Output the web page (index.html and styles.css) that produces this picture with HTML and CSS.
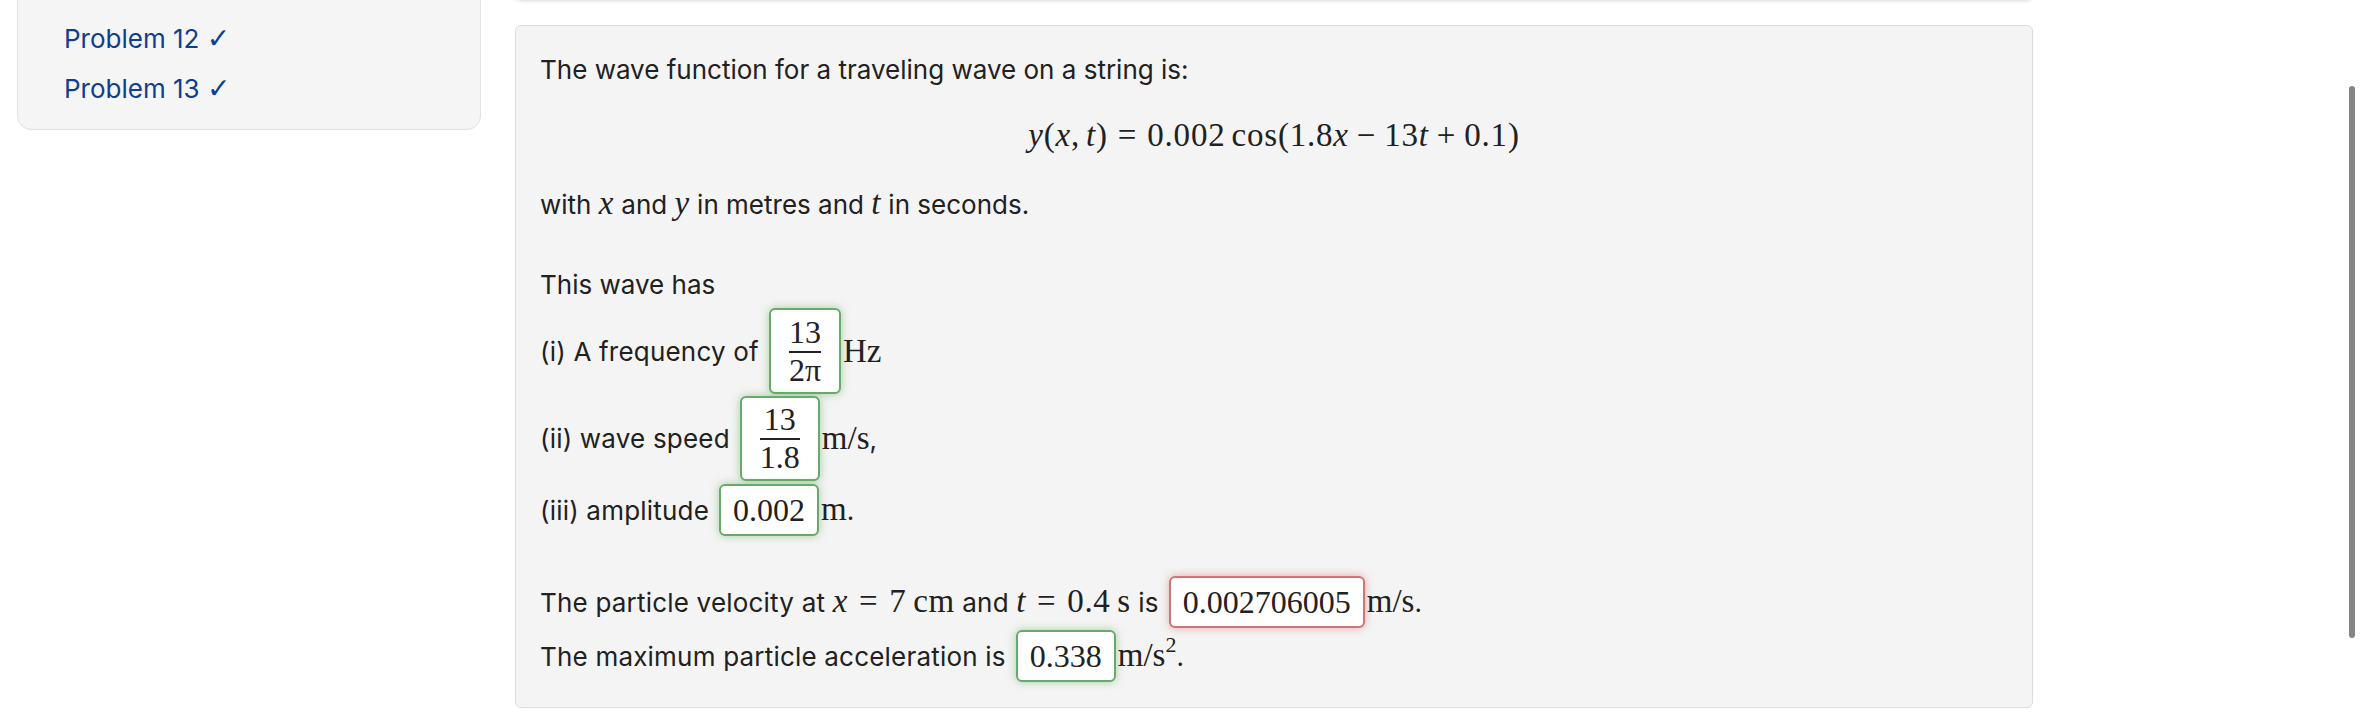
FILE: index.html
```html
<!DOCTYPE html>
<html lang="en">
<head>
<meta charset="utf-8">
<title>Problem 13</title>
<link rel="stylesheet" href="styles.css">
</head>
<body>
<div class="page">
  <aside class="sidebar">
    <a class="nav-link" href="#">Problem 12 <span class="tick">✓</span></a>
    <a class="nav-link" href="#">Problem 13 <span class="tick">✓</span></a>
  </aside>
  <main class="main">
    <div class="prev-card"></div>
    <section class="card">
      <p class="line l1">The wave function for a traveling wave on a string is:</p>
      <div class="display-eq"><span class="mi">y</span>(<span class="mi">x</span>,<span class="sp"></span><span class="mi">t</span>)<span class="rel">=</span>0.002<span class="sp"></span>cos(1.8<span class="mi">x</span><span class="bin">−</span>13<span class="mi">t</span><span class="bin">+</span>0.1)</div>
      <p class="line l2">with <span class="math"><span class="mi">x</span></span> and <span class="math"><span class="mi">y</span></span> in metres and <span class="math"><span class="mi">t</span></span> in seconds.</p>
      <p class="line l3">This wave has</p>
      <div class="row r1">
        <span class="txt">(i) A frequency of</span>
        <span class="ans ok frac-box h86"><span class="frac"><span class="num">13</span><span class="bar"></span><span class="den">2π</span></span></span>
        <span class="unit">Hz</span>
      </div>
      <div class="row r2">
        <span class="txt">(ii) wave speed</span>
        <span class="ans ok frac-box h85"><span class="frac"><span class="num">13</span><span class="bar"></span><span class="den">1.8</span></span></span>
        <span class="unit">m/s<span class="punct">,</span></span>
      </div>
      <div class="row r3">
        <span class="txt">(iii) amplitude</span>
        <span class="ans ok simple">0.002</span>
        <span class="unit">m<span class="punct">.</span></span>
      </div>
      <div class="row r4">
        <span class="txt">The particle velocity at <span class="math"><span class="mi">x</span><span class="rel">=</span>7<span class="thin"></span>cm</span> and <span class="math"><span class="mi">t</span><span class="rel">=</span>0.4<span class="thin"></span>s</span> is</span>
        <span class="ans bad simple">0.002706005</span>
        <span class="unit">m/s<span class="punct">.</span></span>
      </div>
      <div class="row r5">
        <span class="txt">The maximum particle acceleration is</span>
        <span class="ans ok simple">0.338</span>
        <span class="unit">m/s<sup class="sup">2</sup><span class="punct">.</span></span>
      </div>
    </section>
  </main>
</div>
<div class="scroll-thumb"></div>
</body>
</html>
```

FILE: styles.css
```css
html, body {
  margin: 0;
  padding: 0;
  background: #ffffff;
}
body {
  font-family: Inter, "Noto Sans", "Liberation Sans", sans-serif;
  color: #212121;
  width: 2360px;
  height: 725px;
  overflow: hidden;
}
.page {
  display: flex;
  align-items: flex-start;
  margin-top: -60px;
}
.sidebar {
  box-sizing: border-box;
  width: 464px;
  margin-left: 17px;
  height: 190px;
  padding: 73px 20px 0 46px;
  background: #f5f5f5;
  border: 1px solid #e2e2e2;
  border-radius: 14px;
  display: flex;
  flex-direction: column;
}
.nav-link {
  display: block;
  height: 50px;
  font-size: 26px;
  line-height: 50px;
  color: #0f3e91;
  text-decoration: none;
  white-space: nowrap;
}
.tick {
  font-family: "DejaVu Sans", sans-serif;
  font-size: 28px;
  line-height: 1;
}
.main {
  width: 1518px;
  margin-left: 34px;
  display: flex;
  flex-direction: column;
}
.prev-card {
  height: 59px;
  background: #f4f4f4;
  border-radius: 0 0 6px 6px;
  box-shadow: 0 1px 4px rgba(0,0,0,0.22);
}
.card {
  box-sizing: border-box;
  margin-top: 26px;
  height: 683px;
  padding: 24px 24px 24px 24px;
  background: #f4f4f4;
  border: 1px solid #dcdcdc;
  border-radius: 6px;
  display: flex;
  flex-direction: column;
  align-items: stretch;
}
.line {
  margin: 0;
  font-size: 26px;
  line-height: 39px;
}
.l2 { margin-top: 26px; }
.l3 { margin-top: 41px; }
.math, .display-eq, .unit, .ans {
  font-family: "Liberation Serif", "DejaVu Serif", serif;
}
.math {
  font-size: 33px;
  letter-spacing: 0.6px;
}
.mi {
  font-style: italic;
}
.display-eq {
  margin-top: 24px;
  text-align: center;
  font-size: 33px;
  letter-spacing: 0.8px;
  line-height: 45px;
}
.sp { display: inline-block; width: 6px; }
.thin { display: inline-block; width: 7px; }
.rel { margin: 0 10px; }
.math .rel { margin: 0 11px; }
.bin { margin: 0 8px; }
.row {
  display: flex;
  align-items: center;
  font-size: 26px;
  line-height: 39px;
}
.row .txt { letter-spacing: 0.2px; }
.row .txt .math { letter-spacing: 0.6px; }
.r1 { margin-top: 4px; }
.r2 { margin-top: 2px; }
.r3 { margin-top: 3px; }
.r4 { margin-top: 40px; }
.r5 { margin-top: 2px; }
.txt { white-space: pre; }
.ans {
  box-sizing: border-box;
  margin-left: 10px;
  background: #ffffff;
  border: 2px solid #6aa96c;
  border-radius: 6px;
  box-shadow: 0 0 8px rgba(90, 170, 90, 0.5);
  font-size: 32px;
  display: inline-flex;
  align-items: center;
  justify-content: center;
  padding: 0 12px;
}
.ans.bad {
  border-color: #d47373;
  box-shadow: 0 0 8px rgba(210, 100, 100, 0.5);
}
.simple { height: 52px; }
.h86 { height: 86px; }
.h85 { height: 85px; }
.frac {
  display: inline-flex;
  flex-direction: column;
  align-items: center;
  margin: 0 6px;
}
.num, .den {
  line-height: 33px;
}
.num { padding-bottom: 2px; }
.den { padding-top: 1px; }
.bar {
  align-self: stretch;
  height: 2px;
  background: #222;
}
.unit {
  margin-left: 2px;
  font-size: 33px;
}
.punct {
  font-family: Inter, "Noto Sans", sans-serif;
  font-size: 26px;
}
.sup {
  font-size: 22px;
  line-height: 0;
  vertical-align: 14px;
}
.scroll-thumb {
  position: absolute;
  left: 2349px;
  top: 86px;
  width: 6px;
  height: 552px;
  border-radius: 3px;
  background: #858585;
}
```
